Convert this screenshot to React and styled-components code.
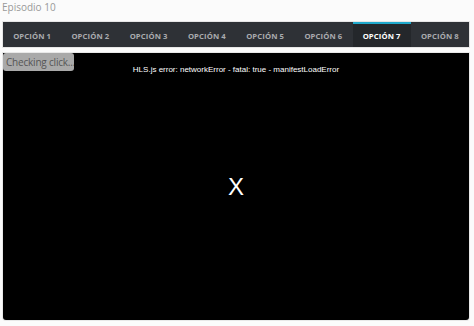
import React from 'react';
import styled, { createGlobalStyle } from 'styled-components';

const GlobalStyle = createGlobalStyle`
  html, body {
    margin: 0;
    padding: 0;
    background: #fbfbfb;
  }
  body {
    font-family: "Open Sans", "Liberation Sans", sans-serif;
  }
`;

const tabs = ['Opción 1', 'Opción 2', 'Opción 3', 'Opción 4', 'Opción 5', 'Opción 6', 'Opción 7', 'Opción 8'];
const activeTab = 6;

const Page = styled.div`
  width: 474px;
  height: 326px;
  padding: 0 5px 0 3px;
  box-sizing: border-box;
  display: flex;
  flex-direction: column;
  overflow: hidden;
`;

const Title = styled.div`
  font-size: 10px;
  color: #999;
  height: 22px;
  line-height: 14px;
  margin-left: -1px;
`;

const Nav = styled.ul`
  list-style: none;
  margin: 0;
  padding: 0;
  display: flex;
  height: 25px;
  background: #2e3136;
  box-shadow: 0 0 0 1px #e6e6e6;
`;

const Tab = styled.li`
  flex: 1;
  display: flex;
  align-items: center;
  justify-content: center;
  font-size: 7.7px;
  font-weight: 700;
  text-transform: uppercase;
  letter-spacing: 0.1px;
  color: ${p => (p.$active ? '#ffffff' : '#a9abae')};
  background: ${p => (p.$active ? '#24272b' : 'transparent')};
  border-top: 2px solid ${p => (p.$active ? '#1fa9cc' : 'transparent')};
  box-sizing: border-box;
`;

const Player = styled.div`
  margin-top: 6px;
  height: 267px;
  background: #000;
  border-radius: 0 0 3px 3px;
  position: relative;
  display: flex;
  flex-direction: column;
  align-items: center;
  box-shadow: 0 0 0 1px #e8e8e8;
`;

const CheckButton = styled.div`
  position: absolute;
  left: 0;
  top: 0;
  width: 71px;
  height: 18px;
  background: #a9a9a9;
  border-radius: 3px;
  color: #555;
  font-size: 10px;
  letter-spacing: -0.2px;
  line-height: 18px;
  padding-left: 3px;
  box-sizing: border-box;
  white-space: nowrap;
  overflow: hidden;
`;

const ErrorText = styled.div`
  margin-top: 12px;
  font-family: "Liberation Sans", Arial, sans-serif;
  font-size: 8px;
  color: #fff;
`;

const Close = styled.div`
  margin-top: 99px;
  font-family: "Liberation Sans", Arial, sans-serif;
  font-size: 24px;
  color: #fff;
`;

export default function App() {
  return (
    <>
      <GlobalStyle />
      <Page>
        <Title>Episodio 10</Title>
        <Nav>
          {tabs.map((t, i) => (
            <Tab key={t} $active={i === activeTab}>{t}</Tab>
          ))}
        </Nav>
        <Player>
          <CheckButton>Checking click...</CheckButton>
          <ErrorText>HLS.js error: networkError - fatal: true - manifestLoadError</ErrorText>
          <Close>X</Close>
        </Player>
      </Page>
    </>
  );
}
